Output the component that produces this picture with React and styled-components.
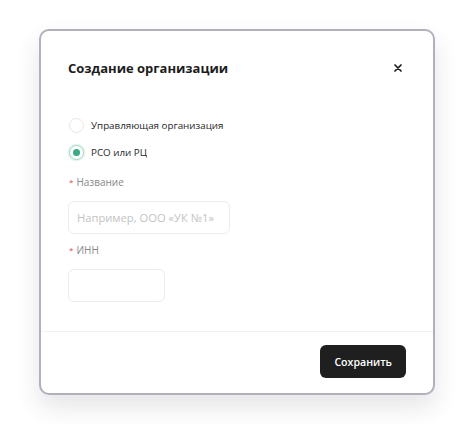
import React from "react";
import styled, { createGlobalStyle } from "styled-components";

const Global = createGlobalStyle`
  html, body { margin: 0; padding: 0; background: #ffffff; }
  body { font-family: "Open Sans", "Noto Sans", sans-serif; }
  * { box-sizing: border-box; }
`;

const Page = styled.div`
  width: 474px;
  height: 424px;
  padding: 29px 0 0 39px;
`;

const Card = styled.div`
  width: 396px;
  height: 366px;
  border: 2px solid #b1b0bd;
  border-radius: 10px;
  background: #ffffff;
  box-shadow: 0 12px 24px rgba(40, 40, 60, 0.12);
  display: flex;
  flex-direction: column;
`;

const Header = styled.div`
  display: flex;
  align-items: center;
  justify-content: space-between;
  padding: 27px 31px 0 27px;
  height: 47px;
`;

const Title = styled.h2`
  margin: 0;
  font-size: 13px;
  line-height: 20px;
  font-weight: 700;
  color: #1c1c1c;
`;

const Close = styled.button`
  border: 0;
  background: none;
  padding: 0;
  width: 9px;
  height: 9px;
  display: flex;
  align-items: center;
  justify-content: center;
  cursor: pointer;
`;

const Body = styled.div`
  flex: 1;
  padding: 40px 27px 0 28px;
  display: flex;
  flex-direction: column;
`;

const RadioGroup = styled.div`
  display: flex;
  flex-direction: column;
  gap: 12px;
`;

const RadioRow = styled.label`
  display: flex;
  align-items: center;
  gap: 7px;
  height: 15px;
  font-size: 9.8px;
  color: #262626;
`;

const RadioCircle = styled.span`
  width: 15px;
  height: 15px;
  border-radius: 50%;
  border: 1px solid ${(p) => (p.$checked ? "#9fd8c3" : "#e6e6e6")};
  box-shadow: ${(p) => (p.$checked ? "0 0 0 1.5px #e6f5ef" : "none")};
  display: flex;
  align-items: center;
  justify-content: center;
  background: #fff;
  &::after {
    content: "";
    width: 7px;
    height: 7px;
    border-radius: 50%;
    background: #3aa985;
    display: ${(p) => (p.$checked ? "block" : "none")};
  }
`;

const Field = styled.div`
  display: flex;
  flex-direction: column;
  margin-top: ${(p) => p.$top}px;
`;

const Label = styled.div`
  font-size: 10px;
  line-height: 16px;
  color: #888888;
  margin-bottom: 11px;
  span {
    color: #e0474c;
    font-size: 8px;
    vertical-align: top;
    margin-right: 3px;
  }
`;

const Input = styled.input`
  width: ${(p) => p.$w}px;
  height: 33px;
  margin-left: -1px;
  border: 1px solid #ececec;
  border-radius: 6px;
  padding: 0 8px;
  font-family: inherit;
  font-size: 11.2px;
  color: #222;
  outline: none;
  &::placeholder { color: #c3c3c3; }
`;

const Divider = styled.div`
  height: 1px;
  background: #f1f1f1;
`;

const Footer = styled.div`
  display: flex;
  justify-content: flex-end;
  padding: 13px 27px 15px 27px;
`;

const Button = styled.button`
  height: 33px;
  padding: 0 14px;
  border: 0;
  border-radius: 6px;
  background: #1f1f1f;
  color: #ffffff;
  font-family: inherit;
  font-size: 10.6px;
  font-weight: 600;
  cursor: pointer;
`;

export default function App() {
  return (
    <>
      <Global />
      <Page>
        <Card>
          <Header>
            <Title>Создание организации</Title>
            <Close aria-label="close">
              <svg width="8" height="8" viewBox="0 0 8 8">
                <path d="M1 1L7 7M7 1L1 7" stroke="#1c1c1c" strokeWidth="1.7" strokeLinecap="round" />
              </svg>
            </Close>
          </Header>
          <Body>
            <RadioGroup>
              <RadioRow>
                <RadioCircle />
                Управляющая организация
              </RadioRow>
              <RadioRow>
                <RadioCircle $checked />
                РСО или РЦ
              </RadioRow>
            </RadioGroup>
            <Field $top={14}>
              <Label><span>*</span>Название</Label>
              <Input $w={162} placeholder="Например, ООО «УК №1»" />
            </Field>
            <Field $top={8}>
              <Label><span>*</span>ИНН</Label>
              <Input $w={97} />
            </Field>
          </Body>
          <Divider />
          <Footer>
            <Button>Сохранить</Button>
          </Footer>
        </Card>
      </Page>
    </>
  );
}
